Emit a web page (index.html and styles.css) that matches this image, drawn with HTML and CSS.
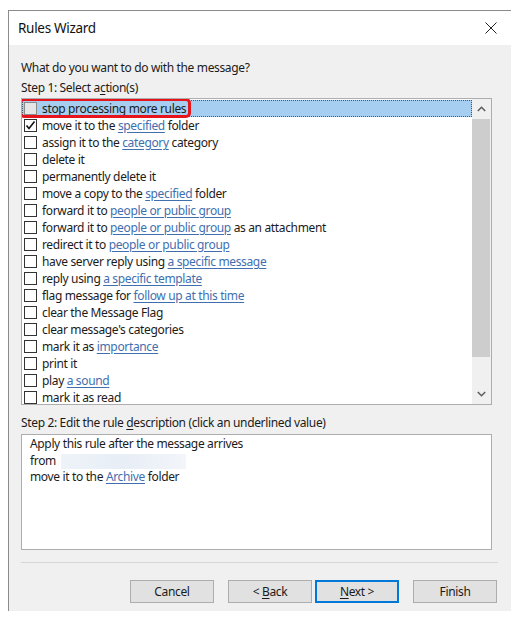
FILE: index.html
```html
<!DOCTYPE html>
<html>
<head>
<meta charset="utf-8">
<title>Rules Wizard</title>
<link rel="stylesheet" href="styles.css">
</head>
<body>
<div class="window">
  <div class="titlebar">
    <span class="title">Rules Wizard</span>
    <svg class="close" width="12" height="12" viewBox="0 0 12 12"><path d="M0.5 0.5 L11.5 11.5 M11.5 0.5 L0.5 11.5" stroke="#222" stroke-width="1" fill="none"/></svg>
  </div>
  <div class="body">
    <div class="question">What do you want to do with the message?</div>
    <div class="label">Step 1: Select a<u>c</u>tion(s)</div>
    <div class="listbox">
      <div class="items">
        <div class="row selected"><span class="cb"></span><span>stop processing more rules</span></div>
        <div class="row"><span class="cb"><svg width="11" height="11" viewBox="0 0 11 11"><path d="M1.5 5.5 L4 8.5 L9.5 1.5" stroke="#111" stroke-width="1.6" fill="none"/></svg></span><span>move it to the <a>specified</a> folder</span></div>
        <div class="row"><span class="cb"></span><span>assign it to the <a>category</a> category</span></div>
        <div class="row"><span class="cb"></span><span>delete it</span></div>
        <div class="row"><span class="cb"></span><span>permanently delete it</span></div>
        <div class="row"><span class="cb"></span><span>move a copy to the <a>specified</a> folder</span></div>
        <div class="row"><span class="cb"></span><span>forward it to <a>people or public group</a></span></div>
        <div class="row"><span class="cb"></span><span>forward it to <a>people or public group</a> as an attachment</span></div>
        <div class="row"><span class="cb"></span><span>redirect it to <a>people or public group</a></span></div>
        <div class="row"><span class="cb"></span><span>have server reply using <a>a specific message</a></span></div>
        <div class="row"><span class="cb"></span><span>reply using <a>a specific template</a></span></div>
        <div class="row"><span class="cb"></span><span>flag message for <a>follow up at this time</a></span></div>
        <div class="row"><span class="cb"></span><span>clear the Message Flag</span></div>
        <div class="row"><span class="cb"></span><span>clear message's categories</span></div>
        <div class="row"><span class="cb"></span><span>mark it as <a>importance</a></span></div>
        <div class="row"><span class="cb"></span><span>print it</span></div>
        <div class="row"><span class="cb"></span><span>play <a>a sound</a></span></div>
        <div class="row"><span class="cb"></span><span>mark it as read</span></div>
      </div>
      <div class="scrollbar">
        <div class="arrow up"><svg width="9" height="6" viewBox="0 0 9 6"><path d="M0.8 5 L4.5 1.3 L8.2 5" stroke="#606060" stroke-width="1.6" fill="none"/></svg></div>
        <div class="thumb"></div>
        <div class="track"></div>
        <div class="arrow down"><svg width="9" height="6" viewBox="0 0 9 6"><path d="M0.8 1 L4.5 4.7 L8.2 1" stroke="#606060" stroke-width="1.6" fill="none"/></svg></div>
      </div>
      <div class="highlight"></div>
    </div>
    <div class="label step2">Step 2: Edit the rule <u>d</u>escription (click an underlined value)</div>
    <div class="desc">
      <div>Apply this rule after the message arrives</div>
      <div>from <span class="blur"></span></div>
      <div>move it to the <a>Archive</a> folder</div>
    </div>
    <div class="separator"></div>
    <div class="buttons">
      <button class="btn">Cancel</button>
      <div class="pair">
        <button class="btn">&lt; <u>B</u>ack</button>
        <button class="btn default"><u>N</u>ext &gt;</button>
      </div>
      <button class="btn">Finish</button>
    </div>
  </div>
</div>
</body>
</html>
```
FILE: styles.css
```css
* { box-sizing: border-box; }
html, body { margin: 0; padding: 0; background: #ffffff; }
body {
  font-family: "Noto Sans", "Open Sans", sans-serif;
  font-size: 12px;
  letter-spacing: -0.35px;
  color: #1b1b1b;
}
.window {
  margin: 10px 0 0 8px;
  width: 503px;
  border-top: 1px solid #8c8c8c;
  border-left: 1px solid #8c8c8c;
}
.titlebar {
  height: 34px;
  background: #ffffff;
  display: flex;
  align-items: center;
  justify-content: space-between;
  padding: 0 14px 0 9px;
}
.title { font-size: 13.5px; letter-spacing: -0.3px; color: #111; }
.body {
  background: #f0f0f0;
  padding: 15px 13px 8px 12px;
  display: flex;
  flex-direction: column;
}
.question, .label { line-height: 16px; }
.question { margin-bottom: 4px; }
.label { margin-bottom: 2px; }
u { text-decoration: underline; text-underline-offset: 2px; }
a {
  color: #3f6faf;
  text-decoration: underline;
  text-underline-offset: 2px;
}
.listbox {
  position: relative;
  width: 471px;
  height: 307px;
  background: #ffffff;
  border: 1px solid #adadad;
  display: flex;
  overflow: hidden;
}
.items {
  flex: 1;
  padding-top: 1px;
}
.row {
  height: 17px;
  display: flex;
  align-items: center;
  gap: 5px;
  padding-left: 2px;
  white-space: nowrap;
}
.row.selected {
  background: #a6cef1;
  outline: 1px dotted #555;
  outline-offset: -1px;
}
.cb {
  width: 13px;
  height: 13px;
  border: 1px solid #333;
  background: #fff;
  display: flex;
  align-items: center;
  justify-content: center;
  flex: none;
}
.selected .cb { background: #e6e6e6; border-color: #8a8a8a; }
.scrollbar {
  width: 19px;
  flex: none;
  background: #f0f0f0;
  display: flex;
  flex-direction: column;
}
.arrow {
  height: 20px;
  display: flex;
  align-items: center;
  justify-content: center;
}
.thumb {
  height: 238px;
  background: #cdcdcd;
  margin-right: 1px;
}
.track { flex: 1; }
.highlight {
  position: absolute;
  left: -3px;
  top: -1px;
  width: 172px;
  height: 20px;
  border: 3px solid #e8141b;
  border-radius: 5px;
}
.step2 { margin-top: 10px; margin-bottom: 3px; }
.desc {
  width: 471px;
  height: 116px;
  background: #fff;
  border: 1px solid #adadad;
  padding: 1px 8px;
  line-height: 16.5px;
}
.blur {
  display: inline-block;
  vertical-align: middle;
  width: 125px;
  height: 15px;
  margin-left: 2px;
  background: linear-gradient(90deg, #eef3f9, #e8eef6 50%, #f2f5fa);
}
.separator {
  height: 1px;
  background: #d5d5d5;
  margin-top: 12px;
  margin-bottom: 17px;
  width: 477px;
}
.buttons {
  display: flex;
  justify-content: flex-end;
  gap: 14px;
  padding-right: 1px;
}
.pair { display: flex; gap: 3px; }
.btn {
  width: 84px;
  height: 23px;
  background: #e1e1e1;
  border: 1px solid #adadad;
  font-family: inherit;
  font-size: 12px;
  letter-spacing: -0.35px;
  color: #1b1b1b;
  padding: 0;
}
.btn.default { border: 2px solid #0078d7; }
```
